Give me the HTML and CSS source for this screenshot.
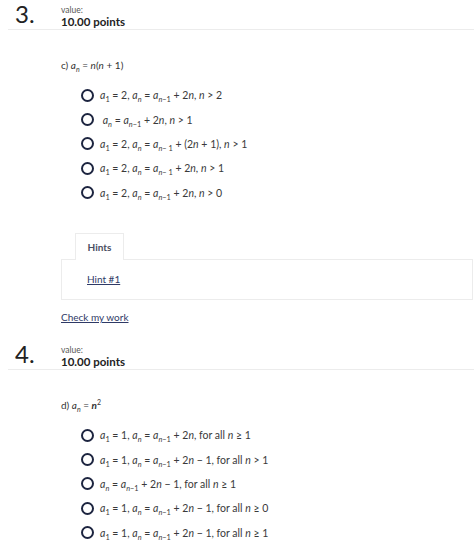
FILE: index.html
```html
<!DOCTYPE html>
<html>
<head>
<meta charset="utf-8">
<link rel="stylesheet" href="styles.css">
</head>
<body>
<div class="question">
  <div class="qhead">
    <div class="qnum">3.</div>
    <div class="qval">
      <div class="vlabel">value:</div>
      <div class="vpoints">10.00 points</div>
    </div>
  </div>
  <div class="qbody">
    <div class="prompt">c) <i>a</i><sub><i>n</i></sub> = <i>n</i>(<i>n</i> + 1)</div>
    <div class="options">
      <div class="opt"><span class="radio"></span><span class="otext"><i>a</i><sub>1</sub> = 2, <i>a</i><sub><i>n</i></sub> = <i>a</i><sub><i>n</i>−1</sub> + 2<i>n</i>, <i>n</i> &gt; 2</span></div>
      <div class="opt"><span class="radio"></span><span class="otext">&nbsp;<i>a</i><sub><i>n</i></sub> = <i>a</i><sub><i>n</i>−1</sub> + 2<i>n</i>, <i>n</i> &gt; 1</span></div>
      <div class="opt"><span class="radio"></span><span class="otext"><i>a</i><sub>1</sub> = 2, <i>a</i><sub><i>n</i></sub> = <i>a</i><sub><i>n</i>− 1</sub> + (2<i>n</i> + 1), <i>n</i> &gt; 1</span></div>
      <div class="opt"><span class="radio"></span><span class="otext"><i>a</i><sub>1</sub> = 2, <i>a</i><sub><i>n</i></sub> = <i>a</i><sub><i>n</i>− 1</sub> + 2<i>n</i>, <i>n</i> &gt; 1</span></div>
      <div class="opt"><span class="radio"></span><span class="otext"><i>a</i><sub>1</sub> = 2, <i>a</i><sub><i>n</i></sub> = <i>a</i><sub><i>n</i>−1</sub> + 2<i>n</i>, <i>n</i> &gt; 0</span></div>
    </div>
    <div class="hints">
      <div class="tab">Hints</div>
      <div class="hintbox"><a class="link" href="#">Hint #1</a></div>
    </div>
    <div class="check"><a class="link" href="#">Check my work</a></div>
  </div>
</div>

<div class="question q4">
  <div class="qhead">
    <div class="qnum">4.</div>
    <div class="qval">
      <div class="vlabel">value:</div>
      <div class="vpoints">10.00 points</div>
    </div>
  </div>
  <div class="qbody">
    <div class="prompt">d) <i>a</i><sub><i>n</i></sub> = <b><i>n</i></b><sup>2</sup></div>
    <div class="options">
      <div class="opt"><span class="radio"></span><span class="otext"><i>a</i><sub>1</sub> = 1, <i>a</i><sub><i>n</i></sub> = <i>a</i><sub><i>n</i>−1</sub> + 2<i>n</i>, for all <i>n</i> ≥ 1</span></div>
      <div class="opt"><span class="radio"></span><span class="otext"><i>a</i><sub>1</sub> = 1, <i>a</i><sub><i>n</i></sub> = <i>a</i><sub><i>n</i>−1</sub> + 2<i>n</i> − 1, for all <i>n</i> &gt; 1</span></div>
      <div class="opt"><span class="radio"></span><span class="otext"><i>a</i><sub><i>n</i></sub> = <i>a</i><sub><i>n</i>−1</sub> + 2<i>n</i> − 1, for all <i>n</i> ≥ 1</span></div>
      <div class="opt"><span class="radio"></span><span class="otext"><i>a</i><sub>1</sub> = 1, <i>a</i><sub><i>n</i></sub> = <i>a</i><sub><i>n</i>−1</sub> + 2<i>n</i> − 1, for all <i>n</i> ≥ 0</span></div>
      <div class="opt"><span class="radio"></span><span class="otext"><i>a</i><sub>1</sub> = 1, <i>a</i><sub><i>n</i></sub> = <i>a</i><sub><i>n</i>−1</sub> + 2<i>n</i> − 1, for all <i>n</i> ≥ 1</span></div>
    </div>
  </div>
</div>
</body>
</html>
```
FILE: styles.css
```css
html, body {
  margin: 0;
  padding: 0;
  background: #fff;
}
body {
  font-family: Lato, "Open Sans", "Liberation Sans", sans-serif;
  color: #333;
  width: 474px;
  overflow: hidden;
}
.question {
  display: flex;
  flex-direction: column;
}
.q4 {
  margin-top: 16px;
}
.qhead {
  display: flex;
  align-items: flex-start;
  height: 30px;
  margin-left: 8px;
  border-bottom: 1px solid #ececec;
  box-sizing: border-box;
}
.qnum {
  width: 53px;
  padding-left: 7px;
  box-sizing: border-box;
  font-size: 24px;
  line-height: 28px;
  color: #222;
}
.qval {
  display: flex;
  flex-direction: column;
  padding-top: 6px;
}
.vlabel {
  font-size: 8.5px;
  line-height: 9px;
  color: #555;
}
.vpoints {
  font-size: 11.5px;
  line-height: 13px;
  font-weight: bold;
  color: #222;
}
.qbody {
  padding-left: 61px;
  display: flex;
  flex-direction: column;
}
.prompt {
  margin-top: 28px;
  font-size: 10px;
  line-height: 14px;
  color: #333;
}
i {
  font-style: italic;
}
sub, sup {
  font-size: 70%;
  line-height: 0;
}
.options {
  margin-top: 11px;
  padding-left: 20px;
  display: flex;
  flex-direction: column;
}
.opt {
  height: 24.4px;
  display: flex;
  align-items: center;
}
.radio {
  width: 13px;
  height: 13px;
  box-sizing: border-box;
  border: 2px solid #1d2540;
  border-radius: 50%;
  flex: none;
}
.otext {
  margin-left: 6px;
  font-size: 10.5px;
  color: #3a3a3a;
  white-space: nowrap;
}
.hints {
  margin-top: 28px;
  display: flex;
  flex-direction: column;
  margin-right: 1px;
}
.tab {
  align-self: flex-start;
  margin-left: 14px;
  width: 49px;
  height: 27px;
  box-sizing: border-box;
  border: 1px solid #ececec;
  border-bottom: none;
  background: #fff;
  font-size: 10px;
  font-weight: bold;
  color: #4a4e62;
  text-align: center;
  line-height: 26px;
  position: relative;
  z-index: 1;
  margin-bottom: -1px;
}
.hintbox {
  height: 41px;
  box-sizing: border-box;
  border: 1px solid #ececec;
  padding-left: 25px;
  display: flex;
  align-items: center;
  font-size: 10px;
}
.link {
  color: #2f3a66;
  text-decoration: underline;
}
.check {
  margin-top: 10px;
  font-size: 10px;
  line-height: 14px;
}
```
